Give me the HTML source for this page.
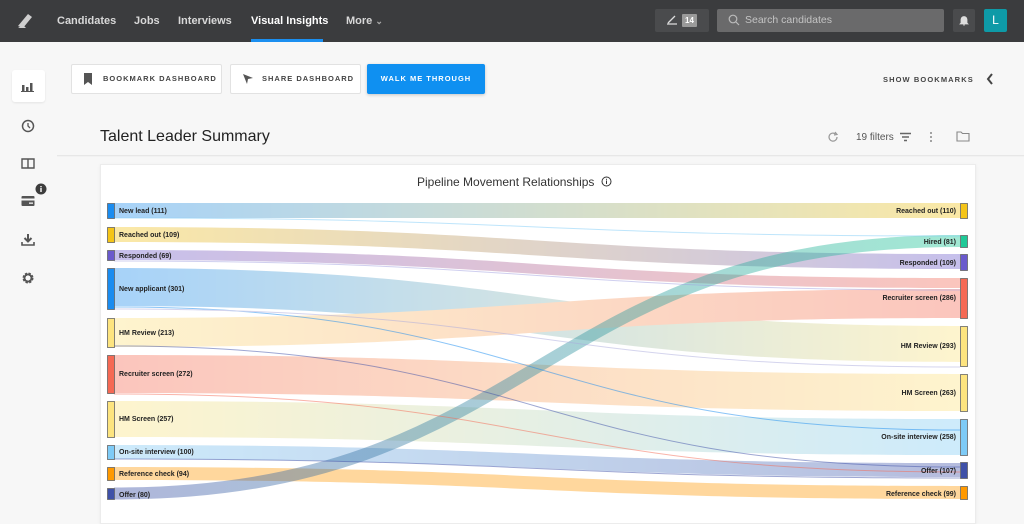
<!DOCTYPE html>
<html><head><meta charset="utf-8"><style>
*{margin:0;padding:0;box-sizing:border-box}
body{width:1024px;height:521px;overflow:hidden;background:#f7f7f7;font-family:"Liberation Sans",sans-serif;position:relative}
.nav{position:absolute;left:0;top:0;width:1024px;height:42px;background:#3b3c3e}
.nav a{position:absolute;top:15px;color:#d8d8d8;font-size:11px;font-weight:bold;white-space:nowrap}
.btn{position:absolute;top:64px;height:30px;background:#fff;border:1px solid #e2e2e2;border-radius:2px;font-size:7.5px;letter-spacing:1px;color:#444;font-weight:bold;line-height:28px;white-space:nowrap}
.side svg{position:absolute}
.lbl{font-family:"Liberation Sans",sans-serif;font-size:7px;font-weight:bold;fill:#222}
</style></head><body>
<div class="nav">
<svg style="position:absolute;left:15px;top:12px" width="20" height="18" viewBox="0 0 20 18"><path d="M3 14 L13 2 L17 5 L8 16 Z" fill="#cfcfcf"/><path d="M3 16 L11 16 L8 13 Z" fill="#cfcfcf"/></svg>
<a style="left:57px">Candidates</a><a style="left:134px">Jobs</a><a style="left:178px">Interviews</a><a style="left:251px;color:#fff">Visual Insights</a><a style="left:346px">More <span style="font-size:9px;color:#aaa">&#8964;</span></a>
<div style="position:absolute;left:251px;top:39px;width:72px;height:3px;background:#1b8ff0"></div>
<div style="position:absolute;left:655px;top:9px;width:54px;height:23px;background:#4a4b4d;border-radius:2px"><svg style="position:absolute;left:11px;top:6px" width="12" height="10"><path d="M1 9 L11 9 M2 8 L9 1" stroke="#ddd" stroke-width="1.3"/></svg><span style="position:absolute;left:27px;top:5px;width:15px;height:13px;background:#9a9a9a;color:#fff;font-size:8px;font-weight:bold;text-align:center;line-height:13px;border-radius:1px">14</span></div>
<div style="position:absolute;left:717px;top:9px;width:227px;height:23px;background:#6a6a6b;border-radius:2px"><svg style="position:absolute;left:11px;top:5px" width="12" height="12"><circle cx="5" cy="5" r="3.8" stroke="#bbb" stroke-width="1.2" fill="none"/><path d="M8 8 L11 11" stroke="#bbb" stroke-width="1.2"/></svg><span style="position:absolute;left:28px;top:5px;color:#c4c4c4;font-size:10.5px">Search candidates</span></div>
<div style="position:absolute;left:953px;top:9px;width:22px;height:23px;background:#4a4b4d;border-radius:2px"><svg style="position:absolute;left:6px;top:6px" width="10" height="11"><path d="M2 8 L2 4.5 A3 3 0 0 1 8 4.5 L8 8 L9 9 L1 9 Z M4 10 L6 10" fill="#ddd" stroke="#ddd" stroke-width="0.8"/></svg></div>
<div style="position:absolute;left:984px;top:9px;width:23px;height:23px;background:#0e9aa7;border-radius:2px;color:#fff;font-size:12px;text-align:center;line-height:23px">L</div>
</div>
<div class="side">
<div style="position:absolute;left:12px;top:70px;width:33px;height:32px;background:#fff;border-radius:3px;box-shadow:0 1px 2px rgba(0,0,0,.08)"></div>
<svg style="left:21px;top:80px" width="14" height="12"><rect x="1" y="5" width="2.5" height="6" fill="#555"/><rect x="5" y="7" width="2.5" height="4" fill="#555"/><rect x="9" y="3" width="2.5" height="8" fill="#555"/><rect x="0" y="11" width="13" height="1" fill="#555"/></svg>
<svg style="left:21px;top:119px" width="14" height="14"><circle cx="7" cy="7" r="5.5" stroke="#555" stroke-width="1.5" fill="none"/><path d="M7 4 L7 7 L9 9" stroke="#555" stroke-width="1.3" fill="none"/></svg>
<svg style="left:21px;top:157px" width="15" height="13"><path d="M1 2 L1 11 L7 11 L7 2 Z M7 2 L13 2 L13 11 L7 11" stroke="#555" stroke-width="1.4" fill="none"/></svg>
<svg style="left:21px;top:195px" width="15" height="12"><rect x="0.5" y="1" width="13" height="10" rx="1" fill="#555"/><rect x="0.5" y="3.5" width="13" height="2" fill="#f7f7f7"/><rect x="8" y="7.5" width="4" height="1.3" fill="#f7f7f7"/></svg>
<svg style="left:35px;top:183px" width="12" height="12"><circle cx="6" cy="6" r="5.5" fill="#3d3d3d"/><rect x="5.3" y="5" width="1.4" height="4" fill="#fff"/><rect x="5.3" y="3" width="1.4" height="1.3" fill="#fff"/></svg>
<svg style="left:21px;top:233px" width="14" height="14"><path d="M7 1 L7 8 M3.5 5 L7 8.5 L10.5 5" stroke="#555" stroke-width="2" fill="none"/><path d="M1 9 L1 12 L13 12 L13 9" stroke="#555" stroke-width="1.6" fill="none"/></svg>
<svg style="left:21px;top:271px" width="14" height="14"><circle cx="7" cy="7" r="4" stroke="#555" stroke-width="3" fill="none" stroke-dasharray="2 1.2"/><circle cx="7" cy="7" r="3.6" stroke="#555" stroke-width="1.8" fill="none"/></svg>
</div>
<div class="btn" style="left:71px;width:151px"><svg style="position:absolute;left:12px;top:8px" width="8" height="12"><path d="M0 0 H8 V12 L4 9 L0 12 Z" fill="#555"/></svg><span style="position:absolute;left:31px">BOOKMARK DASHBOARD</span></div>
<div class="btn" style="left:230px;width:131px"><svg style="position:absolute;left:11px;top:8px" width="12" height="12"><path d="M1 1 L11 5 L6 6 L5 11 Z" fill="#555"/></svg><span style="position:absolute;left:31px">SHARE DASHBOARD</span></div>
<div class="btn" style="left:367px;width:118px;background:#0f90f1;border-color:#0f90f1;color:#fff;text-align:center;box-shadow:0 1px 3px rgba(0,0,0,.2)">WALK ME THROUGH</div>
<div style="position:absolute;left:883px;top:75px;font-size:7.5px;letter-spacing:1.1px;font-weight:bold;color:#444;white-space:nowrap">SHOW BOOKMARKS</div>
<svg style="position:absolute;left:986px;top:73px" width="8" height="12"><path d="M6 1 L2 6 L6 11" stroke="#444" stroke-width="2" fill="none"/></svg>
<div style="position:absolute;left:100px;top:128px;font-size:16px;color:#222;white-space:nowrap">Talent Leader Summary</div>
<svg style="position:absolute;left:827px;top:131px" width="12" height="12"><path d="M10 6 A4 4 0 1 1 8.5 3" stroke="#999" stroke-width="1.2" fill="none"/><path d="M8 1 L10 3.5 L7 4" stroke="#999" stroke-width="1.2" fill="none"/></svg>
<div style="position:absolute;left:856px;top:132px;font-size:10px;color:#555">19 filters</div>
<svg style="position:absolute;left:899px;top:132px" width="13" height="10"><path d="M1 1.5 H12 M3 5 H10 M5 8.5 H8" stroke="#666" stroke-width="1.4"/></svg>
<svg style="position:absolute;left:929px;top:131px" width="4" height="12"><circle cx="2" cy="2" r="1" fill="#888"/><circle cx="2" cy="6" r="1" fill="#888"/><circle cx="2" cy="10" r="1" fill="#888"/></svg>
<svg style="position:absolute;left:956px;top:131px" width="14" height="11"><path d="M1 1 H5 L6.5 2.5 H13 V10 H1 Z" stroke="#888" stroke-width="1.1" fill="none"/></svg>
<div style="position:absolute;left:57px;top:155px;width:967px;height:2px;background:linear-gradient(#e2e2e2,#f7f7f7)"></div>
<div style="position:absolute;left:100px;top:164px;width:876px;height:360px;background:#fff;border:1px solid #ececec;box-shadow:0 1px 3px rgba(0,0,0,.06)">
<div style="position:absolute;left:316px;top:10px;font-size:12px;color:#333;white-space:nowrap">Pipeline Movement Relationships <svg width="11" height="11" style="vertical-align:-1px;margin-left:3px"><circle cx="5.5" cy="5.5" r="4.5" stroke="#333" fill="none"/><rect x="5" y="4.5" width="1" height="3.5" fill="#333"/><rect x="5" y="2.8" width="1" height="1" fill="#333"/></svg></div>
</div>
<svg style="position:absolute;left:0;top:0" width="1024" height="521">
<defs>
<linearGradient id="g1"><stop offset="0" stop-color="#1a8cf0"/><stop offset="1" stop-color="#f5c518"/></linearGradient>
<linearGradient id="g2"><stop offset="0" stop-color="#f5c518"/><stop offset="1" stop-color="#6a5acd"/></linearGradient>
<linearGradient id="g3"><stop offset="0" stop-color="#6a5acd"/><stop offset="1" stop-color="#f56954"/></linearGradient>
<linearGradient id="g4"><stop offset="0" stop-color="#1a8cf0"/><stop offset="1" stop-color="#fde47f"/></linearGradient>
<linearGradient id="g5"><stop offset="0" stop-color="#fde47f"/><stop offset="1" stop-color="#f56954"/></linearGradient>
<linearGradient id="g6"><stop offset="0" stop-color="#f56954"/><stop offset="1" stop-color="#fde47f"/></linearGradient>
<linearGradient id="g7"><stop offset="0" stop-color="#fde47f"/><stop offset="1" stop-color="#7ecbf7"/></linearGradient>
<linearGradient id="g8"><stop offset="0" stop-color="#7ecbf7"/><stop offset="1" stop-color="#3f51a8"/></linearGradient>
<linearGradient id="g9"><stop offset="0" stop-color="#ff9900"/><stop offset="1" stop-color="#ff9900"/></linearGradient>
<linearGradient id="g10"><stop offset="0" stop-color="#3f51a8"/><stop offset="1" stop-color="#20c997"/></linearGradient>
</defs>
<g opacity="0.38">
<path d="M114 203 C537 203 537 203 960 203 L960 218 C537 218 537 218 114 218 Z" fill="url(#g1)"/>
<path d="M114 227 C537 227 537 254 960 254 L960 269 C537 269 537 242 114 242 Z" fill="url(#g2)"/>
<path d="M114 250 C537 250 537 278 960 278 L960 288 C537 288 537 260 114 260 Z" fill="url(#g3)"/>
<path d="M114 268 C537 268 537 326 960 326 L960 362 C537 362 537 306 114 306 Z" fill="url(#g4)"/>
<path d="M114 318 C537 318 537 289 960 289 L960 318 C537 318 537 347 114 347 Z" fill="url(#g5)"/>
<path d="M114 355 C537 355 537 374 960 374 L960 411 C537 411 537 393 114 393 Z" fill="url(#g6)"/>
<path d="M114 401 C537 401 537 419 960 419 L960 455 C537 455 537 437 114 437 Z" fill="url(#g7)"/>
<path d="M114 445 C537 445 537 463 960 463 L960 477 C537 477 537 459 114 459 Z" fill="url(#g8)"/>
<path d="M114 467 C537 467 537 486 960 486 L960 499 C537 499 537 480 114 480 Z" fill="url(#g9)"/>
</g>
<path d="M114 493.5 C537 493.5 537 241 960 241" stroke="url(#g10)" stroke-width="12" fill="none" opacity="0.42"/>
<g fill="none" stroke-width="1" opacity="0.5">
<path d="M114 218 C537 218 537 236 960 236" stroke="#7ecbf7"/>
<path d="M114 261 C537 261 537 290 960 290" stroke="#a0a0e0"/>
<path d="M114 307 C537 307 537 430 960 430" stroke="#1a8cf0"/>
<path d="M114 309 C537 309 537 367 960 367" stroke="#aad"/>
<path d="M114 346 C537 346 537 467 960 467" stroke="#3f51a8"/>
<path d="M114 394 C537 394 537 472 960 472" stroke="#f56954"/>
<path d="M114 459 C537 459 537 478 960 478" stroke="#3f51a8"/>
</g>
<g stroke="#666" stroke-width="0.8">
<rect x="107.5" y="203.5" width="7" height="15" fill="#1a8cf0"/>
<rect x="107.5" y="227.5" width="7" height="15" fill="#f5c518"/>
<rect x="107.5" y="250.5" width="7" height="10" fill="#6a5acd"/>
<rect x="107.5" y="268.5" width="7" height="41" fill="#1a8cf0"/>
<rect x="107.5" y="318.5" width="7" height="29" fill="#fde47f"/>
<rect x="107.5" y="355.5" width="7" height="38" fill="#f56954"/>
<rect x="107.5" y="401.5" width="7" height="36" fill="#fde47f"/>
<rect x="107.5" y="445.5" width="7" height="14" fill="#7ecbf7"/>
<rect x="107.5" y="467.5" width="7" height="13" fill="#ff9900"/>
<rect x="107.5" y="488.5" width="7" height="11" fill="#3f51a8"/>
<rect x="960.5" y="203.5" width="7" height="15" fill="#f5c518"/>
<rect x="960.5" y="235.5" width="7" height="12" fill="#20c997"/>
<rect x="960.5" y="254.5" width="7" height="16" fill="#6a5acd"/>
<rect x="960.5" y="278.5" width="7" height="40" fill="#f56954"/>
<rect x="960.5" y="326.5" width="7" height="40" fill="#fde47f"/>
<rect x="960.5" y="374.5" width="7" height="37" fill="#fde47f"/>
<rect x="960.5" y="419.5" width="7" height="36" fill="#7ecbf7"/>
<rect x="960.5" y="462.5" width="7" height="16" fill="#3f51a8"/>
<rect x="960.5" y="486.5" width="7" height="13" fill="#ff9900"/>
</g>
<g class="lbl">
<text x="119" y="213">New lead (111)</text>
<text x="119" y="237">Reached out (109)</text>
<text x="119" y="258">Responded (69)</text>
<text x="119" y="291">New applicant (301)</text>
<text x="119" y="335">HM Review (213)</text>
<text x="119" y="376">Recruiter screen (272)</text>
<text x="119" y="421">HM Screen (257)</text>
<text x="119" y="454">On-site interview (100)</text>
<text x="119" y="476">Reference check (94)</text>
<text x="119" y="497">Offer (80)</text>
</g>
<g class="lbl" text-anchor="end">
<text x="956" y="213">Reached out (110)</text>
<text x="956" y="244">Hired (81)</text>
<text x="956" y="265">Responded (109)</text>
<text x="956" y="300">Recruiter screen (286)</text>
<text x="956" y="348">HM Review (293)</text>
<text x="956" y="395">HM Screen (263)</text>
<text x="956" y="439">On-site interview (258)</text>
<text x="956" y="473">Offer (107)</text>
<text x="956" y="496">Reference check (99)</text>
</g>
</svg>
</body></html>
